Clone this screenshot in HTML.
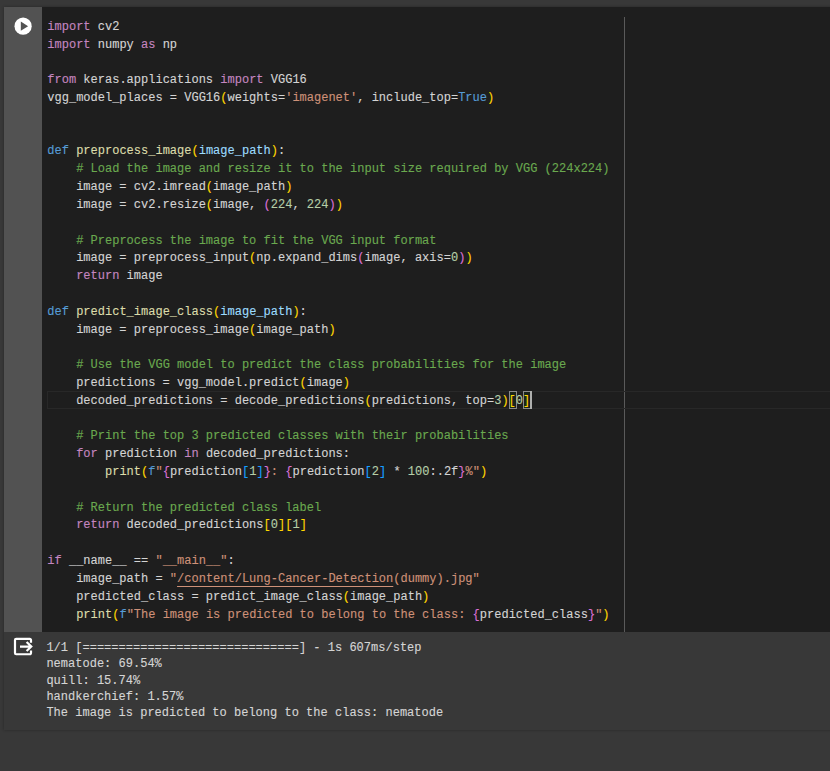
<!DOCTYPE html>
<html><head><meta charset="utf-8">
<style>
html,body{margin:0;padding:0;}
body{width:830px;height:771px;overflow:hidden;background:#383838;position:relative;font-family:"Liberation Mono","DejaVu Sans Mono",monospace;}
.cell{position:absolute;left:4px;top:7px;width:830px;height:722.6px;background:#383838;box-shadow:0 0 3px 0 rgba(0,0,0,.3);}
.gutter{position:absolute;left:4px;top:7px;width:38px;height:624.5px;background:#525252;}
.code{position:absolute;left:42px;top:7px;width:788px;height:624.5px;background:#1e1e1e;}
.ruler{position:absolute;left:624px;top:17px;width:1px;height:614.5px;background:#5a5a5a;}
.ln{-webkit-text-stroke:0.12px;position:absolute;left:47.3px;height:18px;line-height:18px;font-size:12px;letter-spacing:0.006px;color:#d4d4d4;white-space:pre;}
.ol{-webkit-text-stroke:0.12px;position:absolute;left:46.4px;height:16px;line-height:16px;font-size:12px;letter-spacing:0.013px;color:#d5d5d5;white-space:pre;}
.cur{position:absolute;left:47px;top:390.5px;width:783px;height:18.4px;box-sizing:border-box;border:1.9px solid #282828;border-right:none;}
.k{color:#c586c0}.b{color:#569cd6}.f{color:#dcdcaa}.p{color:#9cdcfe}.s{color:#ce9178}.n{color:#b5cea8}.c{color:#6aa94f}
.g{color:#ffd700}.m{color:#da70d6}.u{color:#179fff}
.lk{text-decoration:underline;text-decoration-thickness:1px;text-underline-offset:4px;}
.bmb{position:absolute;top:391px;width:8px;height:18px;box-sizing:border-box;border:1px solid #8a8a8a;background:rgba(0,100,0,.1);}
.caret{position:absolute;left:530.3px;top:391px;width:1.7px;height:18px;background:#aeafad;}
.play{position:absolute;left:14px;top:17px;width:18px;height:18px;}
.oicon{position:absolute;left:13.2px;top:637.4px;width:20px;height:19.2px;}
</style></head><body>
<div class="cell"></div>
<div class="gutter"></div>
<svg class="play" viewBox="0 0 18 18"><circle cx="9.1" cy="9.2" r="8.6" fill="#fff"/><path d="M6.8 4.6 L14.1 9.2 L6.8 13.8 Z" fill="#525252"/></svg>
<div class="code"></div>
<div class="ruler"></div>
<div class="cur"></div>
<div class="bmb" style="left:509px"></div><div class="bmb" style="left:523px"></div><div class="caret"></div>
<div class="ln" style="top:18px"><span class="k">import</span> cv2</div>
<div class="ln" style="top:36px"><span class="k">import</span> numpy <span class="k">as</span> np</div>
<div class="ln" style="top:71px"><span class="k">from</span> keras.applications <span class="k">import</span> VGG16</div>
<div class="ln" style="top:89px">vgg_model_places = VGG16<span class="g">(</span>weights=<span class="s">'imagenet'</span>, include_top=<span class="b">True</span><span class="g">)</span></div>
<div class="ln" style="top:142px"><span class="b">def</span> <span class="f">preprocess_image</span><span class="g">(</span><span class="p">image_path</span><span class="g">)</span>:</div>
<div class="ln" style="top:160px">    <span class="c"># Load the image and resize it to the input size required by VGG (224x224)</span></div>
<div class="ln" style="top:178px">    image = cv2.imread<span class="g">(</span>image_path<span class="g">)</span></div>
<div class="ln" style="top:196px">    image = cv2.resize<span class="g">(</span>image, <span class="m">(</span><span class="n">224</span>, <span class="n">224</span><span class="m">)</span><span class="g">)</span></div>
<div class="ln" style="top:232px">    <span class="c"># Preprocess the image to fit the VGG input format</span></div>
<div class="ln" style="top:249px">    image = preprocess_input<span class="g">(</span>np.expand_dims<span class="m">(</span>image, axis=<span class="n">0</span><span class="m">)</span><span class="g">)</span></div>
<div class="ln" style="top:267px">    <span class="k">return</span> image</div>
<div class="ln" style="top:303px"><span class="b">def</span> <span class="f">predict_image_class</span><span class="g">(</span><span class="p">image_path</span><span class="g">)</span>:</div>
<div class="ln" style="top:321px">    image = preprocess_image<span class="g">(</span>image_path<span class="g">)</span></div>
<div class="ln" style="top:356px">    <span class="c"># Use the VGG model to predict the class probabilities for the image</span></div>
<div class="ln" style="top:374px">    predictions = vgg_model.predict<span class="g">(</span>image<span class="g">)</span></div>
<div class="ln" style="top:392px">    decoded_predictions = decode_predictions<span class="g">(</span>predictions, top=<span class="n">3</span><span class="g">)</span><span class="g bm">[</span><span class="n">0</span><span class="g bm">]</span></div>
<div class="ln" style="top:427px">    <span class="c"># Print the top 3 predicted classes with their probabilities</span></div>
<div class="ln" style="top:445px">    <span class="k">for</span> prediction <span class="k">in</span> decoded_predictions:</div>
<div class="ln" style="top:463px">        <span class="f">print</span><span class="g">(</span><span class="b">f</span><span class="s">"</span><span class="m">{</span>prediction<span class="u">[</span><span class="n">1</span><span class="u">]</span><span class="m">}</span><span class="s">: </span><span class="m">{</span>prediction<span class="u">[</span><span class="n">2</span><span class="u">]</span> * <span class="n">100</span>:.2f<span class="m">}</span><span class="s">%"</span><span class="g">)</span></div>
<div class="ln" style="top:499px">    <span class="c"># Return the predicted class label</span></div>
<div class="ln" style="top:516px">    <span class="k">return</span> decoded_predictions<span class="g">[</span><span class="n">0</span><span class="g">]</span><span class="g">[</span><span class="n">1</span><span class="g">]</span></div>
<div class="ln" style="top:552px"><span class="k">if</span> __name__ == <span class="s">"__main__"</span>:</div>
<div class="ln" style="top:570px">    image_path = <span class="s">"<span class="lk">/content/Lung-Cancer-Detection</span>(dummy).jpg"</span></div>
<div class="ln" style="top:588px">    predicted_class = predict_image_class<span class="g">(</span>image_path<span class="g">)</span></div>
<div class="ln" style="top:606px">    <span class="f">print</span><span class="g">(</span><span class="b">f</span><span class="s">"The image is predicted to belong to the class: </span><span class="m">{</span>predicted_class<span class="m">}</span><span class="s">"</span><span class="g">)</span></div>

<svg class="oicon" viewBox="0 0 20 20" preserveAspectRatio="none" fill="none" stroke="#fff" stroke-width="2.2"><path d="M18 6V3.2a1.2 1.2 0 0 0-1.2-1.2H3.2A1.2 1.2 0 0 0 2 3.2v13.6A1.2 1.2 0 0 0 3.2 18h13.6a1.2 1.2 0 0 0 1.2-1.2V14"/><path d="M7 10h11.2M13.6 5.3l4.7 4.7-4.7 4.7"/></svg>
<div class="ol" style="top:640px">1/1 [==============================] - 1s 607ms/step</div>
<div class="ol" style="top:656px">nematode: 69.54%</div>
<div class="ol" style="top:673px">quill: 15.74%</div>
<div class="ol" style="top:689px">handkerchief: 1.57%</div>
<div class="ol" style="top:705px">The image is predicted to belong to the class: nematode</div>

</body></html>
